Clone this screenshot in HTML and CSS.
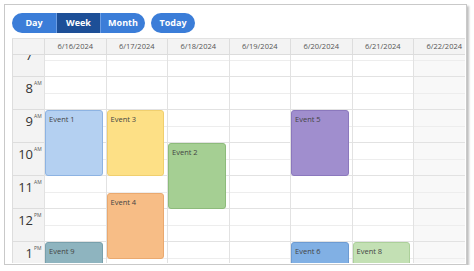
FILE: index.html
```html
<!DOCTYPE html>
<html>
<head>
<meta charset="utf-8">
<link rel="stylesheet" href="styles.css">
</head>
<body>
<div class="frame">
  <div class="toolbar">
    <div class="group">
      <button class="btn">Day</button>
      <button class="btn active">Week</button>
      <button class="btn">Month</button>
    </div>
    <button class="btn single">Today</button>
  </div>
  <div class="cal">
    <div class="head">
      <div class="corner"></div>
      <div class="hcell">6/16/2024</div>
      <div class="hcell">6/17/2024</div>
      <div class="hcell">6/18/2024</div>
      <div class="hcell">6/19/2024</div>
      <div class="hcell">6/20/2024</div>
      <div class="hcell">6/21/2024</div>
      <div class="hcell">6/22/2024</div>
    </div>
    <div class="viewport">
      <div class="body">
        <div class="times">
          <div class="hour"><span class="h">7</span><span class="ap"></span></div>
          <div class="hour"><span class="h">8</span><span class="ap">AM</span></div>
          <div class="hour"><span class="h">9</span><span class="ap">AM</span></div>
          <div class="hour"><span class="h">10</span><span class="ap">AM</span></div>
          <div class="hour"><span class="h">11</span><span class="ap">AM</span></div>
          <div class="hour"><span class="h">12</span><span class="ap">PM</span></div>
          <div class="hour"><span class="h">1</span><span class="ap">PM</span></div>
        </div>
        <div class="day">
          <div class="slots"><i></i><i></i><i></i><i></i><i></i><i></i><i></i><i></i><i></i><i></i><i></i><i></i><i></i><i></i></div>
          <div class="ev blue" style="top:66px;height:66px">Event 1</div>
          <div class="ev teal" style="top:198px;height:66px">Event 9</div>
        </div>
        <div class="day">
          <div class="slots"><i></i><i></i><i></i><i></i><i></i><i></i><i></i><i></i><i></i><i></i><i></i><i></i><i></i><i></i></div>
          <div class="ev yellow" style="top:66px;height:66px">Event 3</div>
          <div class="ev orange" style="top:148.5px;height:66px">Event 4</div>
        </div>
        <div class="day">
          <div class="slots"><i></i><i></i><i></i><i></i><i></i><i></i><i></i><i></i><i></i><i></i><i></i><i></i><i></i><i></i></div>
          <div class="ev green" style="top:99px;height:66px">Event 2</div>
        </div>
        <div class="day">
          <div class="slots"><i></i><i></i><i></i><i></i><i></i><i></i><i></i><i></i><i></i><i></i><i></i><i></i><i></i><i></i></div>
        </div>
        <div class="day">
          <div class="slots"><i></i><i></i><i></i><i></i><i></i><i></i><i></i><i></i><i></i><i></i><i></i><i></i><i></i><i></i></div>
          <div class="ev purple" style="top:66px;height:66px">Event 5</div>
          <div class="ev blue2" style="top:198px;height:66px">Event 6</div>
        </div>
        <div class="day">
          <div class="slots"><i></i><i></i><i></i><i></i><i></i><i></i><i></i><i></i><i></i><i></i><i></i><i></i><i></i><i></i></div>
          <div class="ev lgreen" style="top:198px;height:66px">Event 8</div>
        </div>
        <div class="day weekend">
          <div class="slots"><i></i><i></i><i></i><i></i><i></i><i></i><i></i><i></i><i></i><i></i><i></i><i></i><i></i><i></i></div>
        </div>
      </div>
    </div>
  </div>
</div>
</body>
</html>
```
FILE: styles.css
```css
html, body {
  margin: 0;
  padding: 0;
  background: #fff;
}
body {
  font-family: "Open Sans", "Noto Sans", sans-serif;
}
.frame {
  margin: 4px 0 0 4px;
  width: 463px;
  height: 261px;
  box-sizing: border-box;
  border: 1px solid #c9c9c9;
  box-shadow: 2px 2px 2px rgba(0,0,0,0.25);
  padding: 8px 1px 1px 7px;
  display: flex;
  flex-direction: column;
  gap: 5px;
  overflow: hidden;
}
.toolbar {
  display: flex;
  gap: 6px;
  height: 20px;
}
.group {
  display: flex;
  border-radius: 10px;
  overflow: hidden;
}
.btn {
  border: none;
  margin: 0;
  padding: 0;
  height: 20px;
  width: 44px;
  background: #3b7dd8;
  color: #fff;
  font-family: "Open Sans", "Noto Sans", sans-serif;
  font-weight: 700;
  font-size: 9px;
  line-height: 20px;
}
.group .btn + .btn {
  border-left: 1px solid #6c9de3;
}
.group .btn:last-child {
  width: 45px;
}
.btn.active {
  background: #1d4f97;
}
.btn.single {
  border-radius: 10px;
}
.cal {
  flex: 1;
  display: flex;
  flex-direction: column;
  overflow: hidden;
  min-height: 0;
}
.head {
  display: grid;
  grid-template-columns: 32px repeat(7, 61.5px);
  height: 17px;
  flex: none;
  background: #f3f3f3;
  border-bottom: 1px solid #dcdcdc;
  border-top: 1px solid #e2e2e2;
  box-sizing: border-box;
}
.corner, .hcell {
  border-left: 1px solid #dddddd;
}
.hcell {
  font-size: 7.5px;
  color: #555;
  text-align: center;
  line-height: 15px;
}
.viewport {
  flex: 1;
  overflow: hidden;
  min-height: 0;
}
.body {
  display: grid;
  grid-template-columns: 32px repeat(7, 61.5px);
  margin-top: -11px;
}
.times {
  background: #f3f3f3;
  border-left: 1px solid #dddddd;
}
.hour {
  height: 33px;
  box-sizing: border-box;
  border-bottom: 1px solid #dddddd;
  display: flex;
  justify-content: flex-end;
  align-items: flex-start;
  padding: 2px 1px 0 0;
  color: #333;
}
.h {
  font-size: 13px;
  line-height: 18px;
}
.ap {
  font-size: 5px;
  line-height: 9px;
  margin-left: 1px;
  color: #555;
  width: 9px;
}
.day {
  position: relative;
  border-left: 1px solid #e2e2e2;
}
.day.weekend {
  background: #f8f8f8;
}
.slots i {
  display: block;
  height: 16.5px;
  box-sizing: border-box;
  border-bottom: 1px solid #ededed;
}
.slots i:nth-child(2n) {
  border-bottom-color: #e2e2e2;
}
.ev {
  position: absolute;
  left: 0;
  right: 3px;
  box-sizing: border-box;
  border-radius: 3px;
  border: 1px solid;
  font-size: 7.5px;
  color: #444;
  padding: 3px 0 0 3px;
  line-height: 10px;
}
.blue { background: #b4d0f1; border-color: #8db3e2; }
.teal { background: #8eb4bf; border-color: #78a0ac; }
.yellow { background: #fde086; border-color: #f0cf6e; }
.orange { background: #f7bd86; border-color: #eaa96f; }
.green { background: #a5cf93; border-color: #8dbb7b; }
.purple { background: #a08ece; border-color: #8b78bd; }
.blue2 { background: #81b0e4; border-color: #6d9bd2; }
.lgreen { background: #c3e0b4; border-color: #acd09a; }
```
